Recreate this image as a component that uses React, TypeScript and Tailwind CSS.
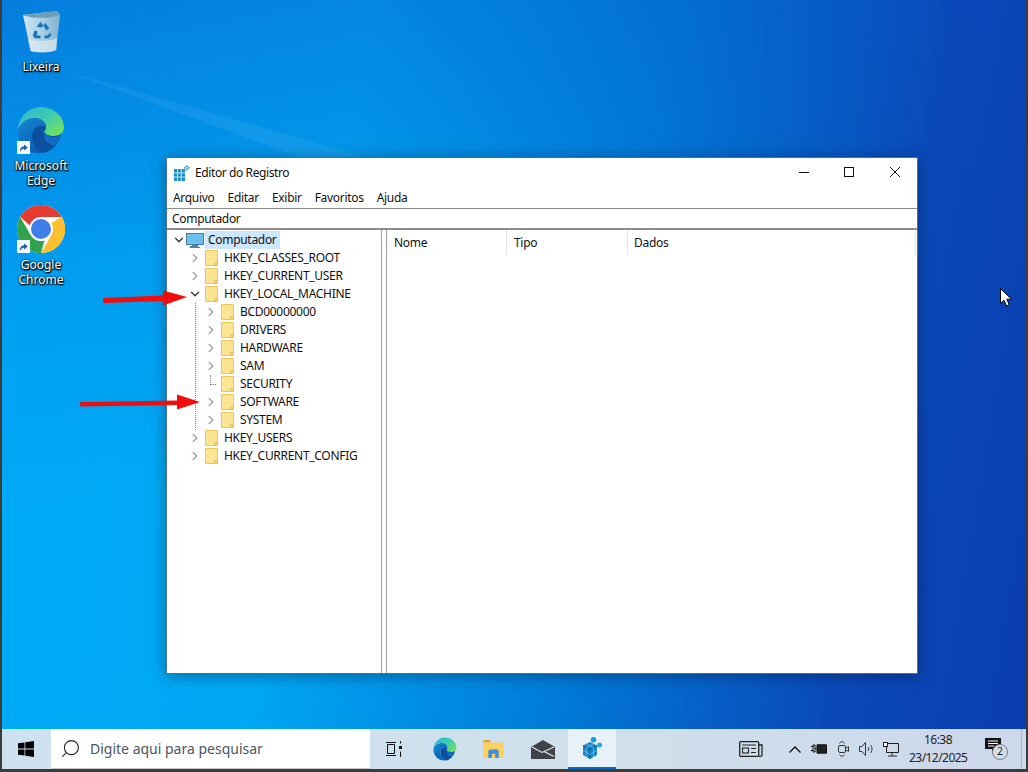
import { ChevronDown, ChevronRight, Search } from "lucide-react";

const FONT = "font-['Noto_Sans','Open_Sans',sans-serif]";

const TREE = [
  { label: "HKEY_CLASSES_ROOT", depth: 0, arrow: "closed" },
  { label: "HKEY_CURRENT_USER", depth: 0, arrow: "closed" },
  { label: "HKEY_LOCAL_MACHINE", depth: 0, arrow: "open" },
  { label: "BCD00000000", depth: 1, arrow: "closed" },
  { label: "DRIVERS", depth: 1, arrow: "closed" },
  { label: "HARDWARE", depth: 1, arrow: "closed" },
  { label: "SAM", depth: 1, arrow: "closed" },
  { label: "SECURITY", depth: 1, arrow: "none" },
  { label: "SOFTWARE", depth: 1, arrow: "closed" },
  { label: "SYSTEM", depth: 1, arrow: "closed" },
  { label: "HKEY_USERS", depth: 0, arrow: "closed" },
  { label: "HKEY_CURRENT_CONFIG", depth: 0, arrow: "closed" },
];

function Folder() {
  return (
    <svg width="14" height="16" viewBox="0 0 14 16" className="shrink-0">
      <path d="M.5.5h12v15H.5z" fill="#fce493" stroke="#e8c65a" />
      <path d="M9.5 15.5v-3h3v3z" fill="#f3d26d" stroke="#e8c65a" />
    </svg>
  );
}

function RegeditIcon() {
  return (
    <svg width="16" height="16" viewBox="0 0 16 16">
      <path d="M0 4h11v12H0z" fill="#1c8fc9" />
      <path d="M3.5 4v12M7.2 4v12M0 8h11M0 12h11" stroke="#e8f4fb" strokeWidth=".8" />
      <path d="M12.8 0 16 2.800l-3.200 3-3-3z" fill="#35a7dd" />
      <path d="M12.8 1.600 14.300 2.800l-1.500 1.400-1.400-1.400z" fill="#d3eefb" />
    </svg>
  );
}

function RegeditCube() {
  return (
    <svg width="20" height="22" viewBox="0 0 20 22">
      <path d="M8 5 15 8.500V18l-7 4-7-4V8.500z" fill="#1583c4" />
      <path d="M1 8.500l7 4 7-4M8 12.500V22" stroke="#0b5f94" strokeWidth=".9" fill="none" />
      <path d="M4.500 6.800 11.500 10.500M11.500 6.800 4.500 10.500M4.500 10.500v9.500M11.500 10.500V20M1 13.500l7 4 7-4" stroke="#6cc6ee" strokeWidth=".7" fill="none" />
      <circle cx="11.500" cy="2.800" r="2.800" fill="#1f97d6" />
      <circle cx="17.500" cy="8" r="2.500" fill="#2aa5e0" />
    </svg>
  );
}

function Shortcut({ className }: { className: string }) {
  return (
    <svg width="13" height="13" viewBox="0 0 13 13" className={className}>
      <rect width="13" height="13" fill="#f2f6fa" />
      <path d="M3 11c0-4 1.500-5.500 4-5.600V3.400l3.800 3.200L7 9.600V7.700C5.200 7.700 4 9 3 11z" fill="#1f5fa8" />
    </svg>
  );
}

function EdgeIcon({ size }: { size: number }) {
  return (
    <svg width={size} height={size} viewBox="0 0 48 48">
      <defs>
        <linearGradient id={`edgeTop${size}`} x1="0" y1="0" x2="1" y2="0.8">
          <stop offset="0" stopColor="#2fb4d6" />
          <stop offset="0.55" stopColor="#3ecbb0" />
          <stop offset="1" stopColor="#73e05a" />
        </linearGradient>
        <linearGradient id={`edgeLow${size}`} x1="0" y1="0" x2="0.7" y2="1">
          <stop offset="0" stopColor="#1487d6" />
          <stop offset="1" stopColor="#0a5db0" />
        </linearGradient>
      </defs>
      <path d="M1 24C2 10 12 1 24 1c13 0 23 10 23 20 0 6-5 9-10 9-6 0-10-2-10-4 0-1 2-2 2-5 0-5-5-9-11-9C10 12 3 17 1 24z" fill={`url(#edgeTop${size})`} />
      <path d="M1 24c2-7 9-12 17-12 6 0 11 4 11 9-5-3-13 0-14 8-1 8 4 15 11 18C12 49 0 38 1 24z" fill={`url(#edgeLow${size})`} />
      <path d="M29 21c0 3-2 4-2 5 0 2 4 4 10 4 3 0 5-1 7-2-2 10-10 18-18 19-7-3-12-10-11-18 1-8 9-11 14-8z" fill="#0b4f9e" />
      <path d="M28 26c1 3 5 5 9 5 2 0 5-1 7-3-1 4-3 8-6 11-4 0-8-1-10-5-1-3-1-6 0-8z" fill="#0f6cc2" />
    </svg>
  );
}

function ChromeIcon() {
  return (
    <svg width="48" height="48" viewBox="0 0 48 48">
      <circle cx="24" cy="24" r="24" fill="#fff" />
      <path d="M3.200 12C7.400 4.800 15.100 0 24 0c8.900 0 16.600 4.800 20.800 12H24a12 12 0 0 0-11.400 8.300z" fill="#e53c31" />
      <path d="M44.800 12A24 24 0 0 1 24 48l10.400-18a12 12 0 0 0-.1-12z" fill="#fcc02e" />
      <path d="M24 48C10.700 48 0 37.300 0 24c0-4.400 1.200-8.500 3.200-12l10.400 18a12 12 0 0 0 10.400 6 12 12 0 0 0 3.500-.5z" fill="#31a24c" />
      <circle cx="24" cy="24" r="10" fill="#3f7ee8" />
    </svg>
  );
}

function RecycleBin() {
  return (
    <svg width="39" height="43" viewBox="0 0 40 44">
      <defs>
        <linearGradient id="binBody" x1="0" y1="0" x2="1" y2="0">
          <stop offset="0" stopColor="#cfe6f2" />
          <stop offset="0.5" stopColor="#a7cfe4" />
          <stop offset="1" stopColor="#7fb3d0" />
        </linearGradient>
      </defs>
      <path d="M1 5 36 1l3 4-4 36c-5 3-22 3-26 1L1 5z" fill="url(#binBody)" />
      <path d="M1 5 36 1l3 4c-10 4-29 4-38 0z" fill="#6f9db6" />
      <path d="M6 30c8 3 22 2 30-1l-1 12c-5 3-22 3-26 1z" fill="#dce8ee" opacity=".75" />
      <path d="M15 17l4-5 3 4-2 2zM24 13l4 6-3 2-3-5zM13 21l3 1-1 4h4v3h-6l-2-3zM29 23l1 3-3 3h-4v-3h3z" fill="#1f74b8" />
    </svg>
  );
}

function DesktopIcon({ top, label, children }: { top: number; label: string[]; children: React.ReactNode }) {
  return (
    <div className="absolute left-[6px] flex w-[66px] flex-col items-center" style={{ top }}>
      <div className="relative flex h-[50px] items-center justify-center">{children}</div>
      <div className="mt-[3px] text-center text-[12px] leading-[15px] text-white [text-shadow:0_1px_2px_#000,0_0_2px_#000,1px_1px_1px_#000]">
        {label.map((l) => (
          <div key={l}>{l}</div>
        ))}
      </div>
    </div>
  );
}

function RedArrow({ className, width, path }: { className: string; width: number; path: string }) {
  return (
    <svg width={width} height="18" viewBox={`0 0 ${width} 18`} className={className}>
      <path d={path} fill="#f20d0d" />
    </svg>
  );
}

export default function App() {
  return (
    <div className={`relative flex h-[772px] w-[1028px] flex-col overflow-hidden border-x-2 border-b-[3px] border-[#3c3c3c] ${FONT} bg-[linear-gradient(100deg,#00abf8_0%,#00a7f3_32%,#007cd9_58%,#0a4ab8_82%,#0a3cae_100%)]`}>
      {/* wallpaper top shade and ray */}
      <div className="absolute inset-0 bg-[linear-gradient(165deg,rgba(10,70,190,0.45)_0%,rgba(10,70,190,0.12)_28%,rgba(10,70,190,0)_50%)]" />
      <svg className="absolute left-0 top-0" width="1028" height="730" viewBox="0 0 1028 730">
        <path d="M60 70 360 156 300 158z" fill="#ffffff" opacity=".06" />
      </svg>

      {/* desktop icons */}
      <DesktopIcon top={6} label={["Lixeira"]}>
        <RecycleBin />
      </DesktopIcon>
      <DesktopIcon top={105} label={["Microsoft", "Edge"]}>
        <EdgeIcon size={48} />
        <Shortcut className="absolute left-0 bottom-[1px]" />
      </DesktopIcon>
      <DesktopIcon top={204} label={["Google", "Chrome"]}>
        <ChromeIcon />
        <Shortcut className="absolute left-0 bottom-[1px]" />
      </DesktopIcon>

      {/* regedit window */}
      <div className="absolute left-[164px] top-[157px] flex h-[517px] w-[752px] flex-col border border-[#4d6f8f] bg-white text-[12px] tracking-[-0.3px] text-[#111] shadow-[0_2px_14px_rgba(0,0,0,0.35)]">
        <div className="flex h-[29px] shrink-0 items-center pl-[7px]">
          <RegeditIcon />
          <span className="ml-[5px] text-[12px] tracking-[-0.4px]">Editor do Registro</span>
          <div className="ml-auto flex h-full items-center">
            <svg width="46" height="29" viewBox="0 0 46 29"><path d="M20 14.500h10" stroke="#111" /></svg>
            <svg width="46" height="29" viewBox="0 0 46 29"><rect x="19.500" y="9.500" width="9" height="9" fill="none" stroke="#111" /></svg>
            <svg width="46" height="29" viewBox="0 0 46 29"><path d="M19 9l10 10M29 9 19 19" stroke="#111" /></svg>
          </div>
        </div>
        <div className="flex h-[21px] shrink-0 items-center gap-[13px] px-[6px]">
          {["Arquivo", "Editar", "Exibir", "Favoritos", "Ajuda"].map((m) => (
            <span key={m}>{m}</span>
          ))}
        </div>
        <div className="flex h-[22px] shrink-0 items-center border-y border-b-2 border-[#8c8c8c] px-[5px]">Computador</div>
        <div className="flex min-h-0 flex-1">
          <div className="relative w-[215px] shrink-0 border-r border-[#a0a0a0] pl-[5px] pt-[1px]">
            <div className="flex h-[18px] items-center">
              <ChevronDown size={14} strokeWidth={2.6} className="text-[#404040]" />
              <svg width="18" height="15" viewBox="0 0 18 15" className="shrink-0">
                <rect x=".5" y=".5" width="17" height="11" fill="#6cc0ee" stroke="#3e7fa8" />
                <path d="M6 12.500h6v1H4v1h10" stroke="#5a7f99" fill="none" />
              </svg>
              <span className="ml-[1px] bg-[#cce8ff] px-[3px]">Computador</span>
            </div>
            {TREE.map((row) => (
              <div key={row.label} className={`relative flex h-[18px] items-center tracking-[-0.3px] ${row.depth === 1 ? "pl-[32px]" : "pl-[16px]"}`}>
                {row.arrow === "closed" && <ChevronRight size={14} strokeWidth={2.6} className="shrink-0 text-[#a6a6a6]" />}
                {row.arrow === "open" && <ChevronDown size={14} strokeWidth={2.6} className="shrink-0 text-[#404040]" />}
                {row.arrow === "none" && (
                  <div className="relative w-[14px] shrink-0">
                    <div className="absolute left-[6px] top-[-9px] h-[10px] border-l border-dotted border-[#808080]" />
                    <div className="absolute left-[6px] top-0 w-[6px] border-t border-dotted border-[#808080]" />
                  </div>
                )}
                <div className="ml-[3px]">
                  <Folder />
                </div>
                <span className="ml-[5px]">{row.label}</span>
              </div>
            ))}
            <div className="absolute left-[28px] top-[73px] h-[127px] border-l border-dotted border-[#808080]" />
          </div>
          <div className="ml-[4px] flex-1 border-l border-[#a0a0a0]">
            <div className="flex h-[25px]">
              <div className="flex w-[120px] items-center border-r border-[#e5e5e5] pl-[7px]">Nome</div>
              <div className="flex w-[121px] items-center border-r border-[#e5e5e5] pl-[7px]">Tipo</div>
              <div className="flex w-[288px] items-center border-r border-[#e5e5e5] pl-[6px]">Dados</div>
            </div>
          </div>
        </div>
      </div>

      {/* red annotation arrows */}
      <RedArrow className="absolute left-[101px] top-[289px]" width={84} path="M1 9 60 6.500V1.500l24 6.500-24 8.500v-4.500L1 14c-1.300 0-1.300-5 0-5z" />
      <RedArrow className="absolute left-[77px] top-[393px]" width={121} path="M2 9 98 7.500V1.500l23 7.500-23 7.500v-4.500L2 13.500c-1.500 0-1.500-4.500 0-4.500z" />

      {/* mouse pointer */}
      <svg className="absolute left-[998px] top-[288px]" width="13" height="19" viewBox="0 0 13 19">
        <path d="M.5.500v15l3.500-3.300 2.500 5.800 2.800-1.200-2.500-5.600H11.500z" fill="#fff" stroke="#000" />
      </svg>

      {/* taskbar */}
      <div className="relative mt-auto flex h-[40px] items-stretch bg-[linear-gradient(90deg,#cde2ef_0%,#cfe0ec_55%,#cdd8ea_100%)]">
        <div className="flex w-[49px] items-center justify-center pr-[1px]">
          <svg width="16" height="16" viewBox="0 0 16 16"><path d="M0 2.300 6.500 1.400v6.200H0zM7.300 1.300 16 0v7.600H7.300zM0 8.400h6.500v6.200L0 13.700zM7.300 8.400H16V16l-8.700-1.300z" fill="#000" /></svg>
        </div>
        <div className="flex w-[319px] items-center border-b border-[#c8c8c8] bg-white pl-[9px]">
          <Search size={21} strokeWidth={1.2} className="-scale-x-100 text-[#222]" />
          <span className="ml-[9px] text-[14px] text-[#4a5561]">Digite aqui para pesquisar</span>
        </div>
        <div className="flex w-[51px] items-center pl-[16px]">
          <svg width="16" height="16" viewBox="0 0 16 16" fill="none" stroke="#111">
            <path d="M0 1.500h10M0 14.500h10M1.500 3.500h7v9h-7zM14.500 0v2.500M14.500 10.500V16" />
            <rect x="13" y="5" width="3" height="3" fill="#111" stroke="none" />
          </svg>
        </div>
        <div className="flex w-[48px] items-center justify-center"><EdgeIcon size={24} /></div>
        <div className="flex w-[49px] items-center justify-center">
          <svg width="21" height="18" viewBox="0 0 24 21">
            <path d="M0 3V1.500C0 .7.700 0 1.500 0h6L10 3z" fill="#e8a11f" />
            <path d="M0 3h22c1 0 2 1 2 2v14c0 1-1 2-2 2H2c-1 0-2-1-2-2z" fill="#fcd05f" />
            <path d="M6 21v-8c0-1 1-2 2-2h8c1 0 2 1 2 2v8h-4v-5h-4v5z" fill="#3c8fdb" />
          </svg>
        </div>
        <div className="flex w-[50px] items-center justify-center">
          <svg width="24" height="19" viewBox="0 0 24 19">
            <path d="M0 7 12 0l12 7v12H0z" fill="#3f4347" />
            <path d="M1 7l10 5.500L23 7M13 11.500l10 5" fill="none" stroke="#e6edf4" strokeWidth="1.100" />
          </svg>
        </div>
        <div className="flex w-[48px] items-center justify-center border-b-[2px] border-[#0a6cc8] bg-[#e8f1f8]">
          <RegeditCube />
        </div>
        <div className="ml-auto flex items-center">
          <svg width="24" height="16" viewBox="0 0 24 16" fill="none" stroke="#222">
            <rect x=".7" y=".7" width="19" height="14.600" rx="1" strokeWidth="1.300" />
            <path d="M20 4h3v10c0 1-1 1.500-3 1.500" strokeWidth="1.300" />
            <rect x="3.500" y="7" width="6" height="5" strokeWidth="1.100" />
            <path d="M3 4h14M12 7.500h5M12 11.500h5" strokeWidth="1.100" />
          </svg>
          <svg width="12" height="7" viewBox="0 0 12 7" fill="none" stroke="#111" strokeWidth="1.300" className="ml-[26px]">
            <path d="M.5 6.500 6 1l5.500 5.500" />
          </svg>
          <svg width="16" height="10" viewBox="0 0 16 10" className="ml-[10px]">
            <path d="M0 2.500h2M0 6.500h2M2 1h2v7H2zM4 4.500h1.500" stroke="#111" fill="none" />
            <path d="M6 .8h9.500v8.400H6z" fill="#222" stroke="#111" />
          </svg>
          <svg width="11" height="16" viewBox="0 0 11 16" fill="none" stroke="#333" className="ml-[11px]">
            <path d="M1.500 2.500c1-2.200 4-2.200 5 0M1.500 13.500c1 2.200 4 2.200 5 0" />
            <rect x=".5" y="4.500" width="7" height="7" rx="1.500" />
            <path d="M8 7l2.500-1.500v5L8 9" />
          </svg>
          <svg width="15" height="14" viewBox="0 0 15 14" fill="none" stroke="#333" className="ml-[10px]">
            <path d="M.5 4.500h2.500l3.500-4v13l-3.500-4H.5zM9 5c1 1 1 3 0 4M11.500 3c2 2 2 6 0 8" />
          </svg>
          <svg width="16" height="15" viewBox="0 0 16 15" fill="none" stroke="#222" className="ml-[9px]">
            <path d="M3.500 1.500h12v9h-12zM9 10.500v3M5 14h9" />
            <rect x=".5" y=".5" width="4" height="4" fill="#fff" />
          </svg>
          <div className="ml-[10px] w-[58px] whitespace-nowrap text-center text-[12px] leading-[18px] tracking-[-0.55px] text-[#222]">
            <div>16:38</div>
            <div>23/12/2025</div>
          </div>
          <div className="relative ml-[18px] h-[20px] w-[24px]">
            <svg width="16" height="14" viewBox="0 0 16 14" className="absolute left-0 top-[-1px]">
              <path d="M0 0h16v11h-6l-3 3v-3H0z" fill="#111" />
              <path d="M3 3h10M3 5.500h10M3 8h6" stroke="#fff" />
            </svg>
            <div className="absolute left-[7px] top-[5px] flex h-[16px] w-[16px] items-center justify-center rounded-full border border-[#777] bg-[#d5dde8] text-[10.500px] tracking-normal text-[#222]">2</div>
          </div>
          <div className="ml-[12px] h-full w-[5px] border-l border-[#aab4c4]" />
        </div>
      </div>
    </div>
  );
}
